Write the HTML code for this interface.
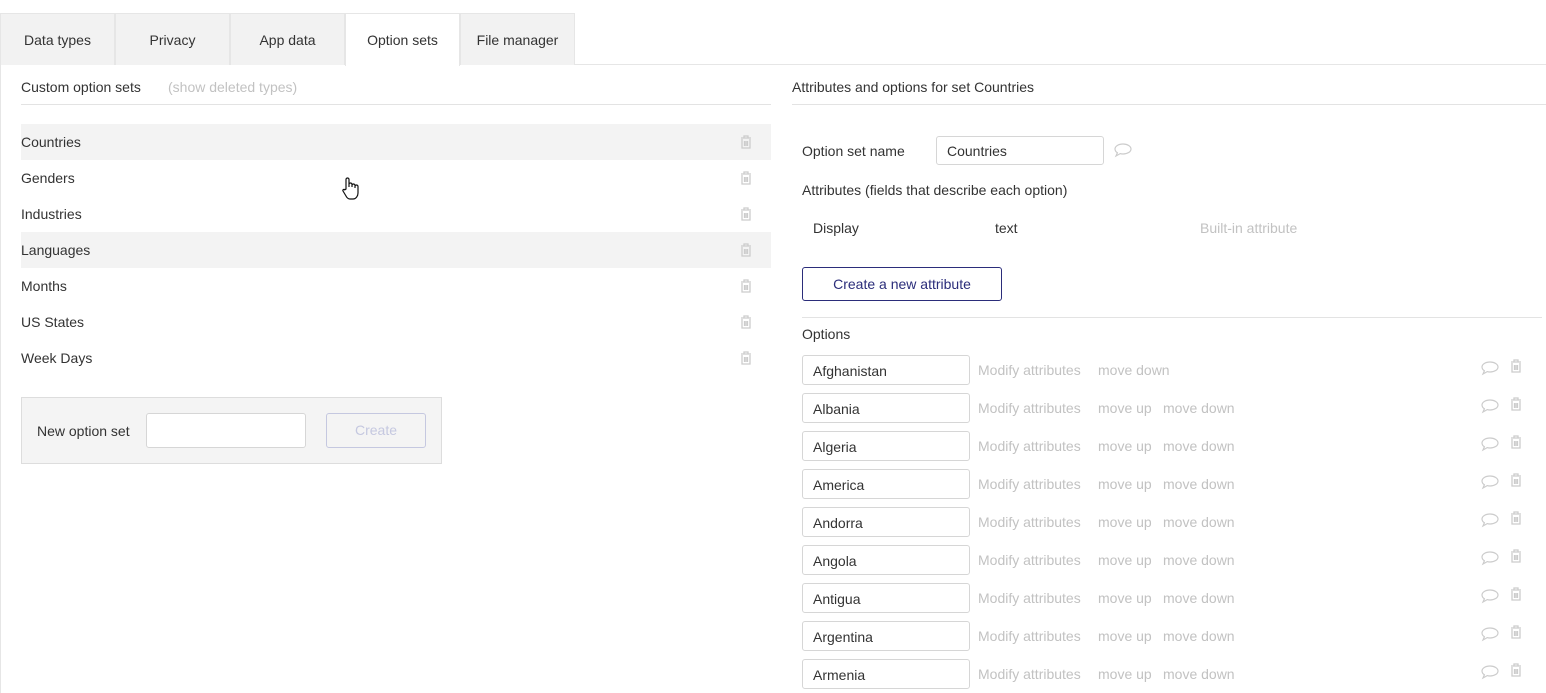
<!DOCTYPE html>
<html><head><style>
*{box-sizing:border-box;margin:0;padding:0}
body{width:1546px;height:691px;background:#fff;font-family:"Liberation Sans",sans-serif;font-size:14px;color:#333;position:relative;overflow:hidden}
.a{position:absolute;white-space:nowrap}
.tab{position:absolute;top:13px;height:52px;width:115px;background:#f2f2f2;border:1px solid #e6e6e6;border-bottom:none;text-align:center;line-height:52px;font-size:14px;color:#333}
.row{position:absolute;left:21px;width:750px;height:36px;line-height:37px;padding-left:0}
.sh{background:#f3f3f3}
.inp{position:absolute;background:#fff;border:1px solid #d6d6d6;border-radius:3px;padding-left:10px;font-size:14px;color:#333}
.g{color:#c2c2c2}
</style></head><body>
<div class="a" style="left:0;top:64px;width:1546px;height:1px;background:#e6e6e6"></div>
<div class="a" style="left:0;top:13px;width:1px;height:680px;background:#e6e6e6"></div>
<div class="tab" style="left:0">Data types</div>
<div class="tab" style="left:115px">Privacy</div>
<div class="tab" style="left:230px">App data</div>
<div class="tab" style="left:345px;background:#fff;height:53px">Option sets</div>
<div class="tab" style="left:460px">File manager</div>

<div class="a" style="left:21px;top:79px">Custom option sets</div>
<div class="a g" style="left:168px;top:79px">(show deleted types)</div>
<div class="a" style="left:21px;top:104px;width:750px;height:1px;background:#e3e3e3"></div>
<div class="row sh" style="top:124px">Countries</div>
<div class="row" style="top:160px">Genders</div>
<div class="row" style="top:196px">Industries</div>
<div class="row sh" style="top:232px">Languages</div>
<div class="row" style="top:268px">Months</div>
<div class="row" style="top:304px">US States</div>
<div class="row" style="top:340px">Week Days</div>
<svg class="a" style="left:739px;top:135px" width="14" height="240" fill="none" stroke="#ccc" stroke-width="1.3">
<g id="t"><path d="M2 3h10M5 3V1h4v2M3 4v9h8V4M5.5 6v5M7 6v5M8.5 6v5"/></g>
<use href="#t" y="36"/><use href="#t" y="72"/><use href="#t" y="108"/><use href="#t" y="144"/><use href="#t" y="180"/><use href="#t" y="216"/>
</svg>
<svg class="a" style="left:341px;top:176px" width="20" height="26" fill="#fff" stroke="#111" stroke-width="1.2"><path d="M5 13V3.5a1.5 1.5 0 0 1 3 0V11V8.5a1.5 1.5 0 0 1 3 0V11V9.5a1.5 1.5 0 0 1 3 0V12V10.5a1.5 1.5 0 0 1 3 0V17c0 3-2 6-5 6H9c-2 0-3-1-4-3l-3-5c-.6-1 .8-2.200 1.800-1.200z"/></svg>

<div class="a" style="left:21px;top:397px;width:421px;height:67px;background:#f4f4f4;border:1px solid #ddd"></div>
<div class="a" style="left:37px;top:423px">New option set</div>
<div class="inp" style="left:146px;top:413px;width:160px;height:35px"></div>
<div class="a" style="left:326px;top:413px;width:100px;height:35px;border:1px solid #c5c8e0;border-radius:3px;text-align:center;line-height:33px;color:#c5c8e0">Create</div>

<div class="a" style="left:792px;top:79px">Attributes and options for set Countries</div>
<div class="a" style="left:792px;top:104px;width:754px;height:1px;background:#e3e3e3"></div>
<div class="a" style="left:802px;top:143px">Option set name</div>
<div class="inp" style="left:936px;top:136px;width:168px;height:29px;line-height:29px">Countries</div>
<svg class="a" style="left:1113px;top:142px" width="20" height="16" fill="none" stroke="#ccc" stroke-width="1.2"><path d="M10 2c4.5 0 8 2.2 8 5s-3.5 5-8 5c-1 0-2-.1-2.8-.4L3 14l1.4-3.2C3 9.9 2 8.5 2 7c0-2.8 3.5-5 8-5z"/></svg>
<div class="a" style="left:802px;top:182px">Attributes (fields that describe each option)</div>
<div class="a" style="left:813px;top:220px">Display</div>
<div class="a" style="left:995px;top:220px">text</div>
<div class="a g" style="left:1200px;top:220px">Built-in attribute</div>
<div class="a" style="left:802px;top:267px;width:200px;height:34px;border:1px solid #2b2d7a;border-radius:3px;text-align:center;line-height:32px;color:#2b2d7a">Create a new attribute</div>
<div class="a" style="left:802px;top:317px;width:740px;height:1px;background:#e3e3e3"></div>
<div class="a" style="left:802px;top:326px">Options</div>

<div id="opts"></div>
<script>
var n=["Afghanistan","Albania","Algeria","America","Andorra","Angola","Antigua","Argentina","Armenia"],h="";
n.forEach(function(s,i){var y=355+i*38;
h+='<div class="inp" style="left:802px;top:'+y+'px;width:168px;height:30px;line-height:31px">'+s+'</div>';
h+='<div class="a g" style="left:978px;top:'+(y+7)+'px">Modify attributes</div>';
if(i){h+='<div class="a g" style="left:1098px;top:'+(y+7)+'px">move up</div><div class="a g" style="left:1163px;top:'+(y+7)+'px">move down</div>';}
else h+='<div class="a g" style="left:1098px;top:'+(y+7)+'px">move down</div>';
h+='<svg class="a" style="left:1480px;top:'+(y+5)+'px" width="20" height="16" fill="none" stroke="#ccc" stroke-width="1.2"><path d="M10 2c4.5 0 8 2.2 8 5s-3.5 5-8 5c-1 0-2-.1-2.8-.4L3 14l1.4-3.2C3 9.9 2 8.5 2 7c0-2.8 3.5-5 8-5z"/></svg>';
h+='<svg class="a" style="left:1509px;top:'+(y+4)+'px" width="14" height="14" fill="none" stroke="#ccc" stroke-width="1.3"><path d="M2 3h10M5 3V1h4v2M3 4v9h8V4M5.5 6v5M7 6v5M8.5 6v5"/></svg>';});
document.getElementById('opts').innerHTML=h;
</script>
</body></html>
